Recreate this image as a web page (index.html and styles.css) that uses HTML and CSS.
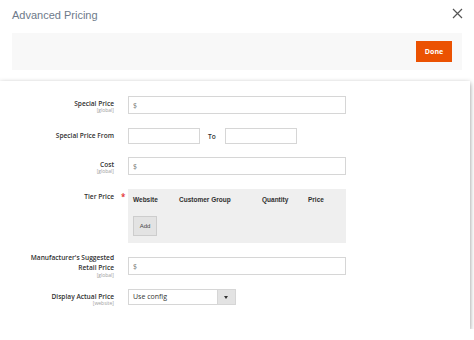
FILE: index.html
```html
<!DOCTYPE html>
<html>
<head>
  <title>Advanced Pricing</title>
  <link rel="stylesheet" href="styles.css">
</head>
<body>
  <div class="modal-header">
    <h1 class="modal-title">Advanced Pricing</h1>
    <button class="close-btn" aria-label="Close">
      <svg width="11" height="11" viewBox="0 0 11 11"><path d="M1 1 L10 10 M10 1 L1 10" stroke="#555" stroke-width="1.2" fill="none"/></svg>
    </button>
  </div>
  <div class="toolbar">
    <button class="done-btn">Done</button>
  </div>
  <div class="panel">
    <div class="field">
      <div class="label">Special Price<span class="scope">[global]</span></div>
      <div class="control"><input class="text-input wide" placeholder="$"></div>
    </div>
    <div class="field short-row">
      <div class="label">Special Price From</div>
      <div class="control range">
        <input class="text-input short">
        <span class="to">To</span>
        <input class="text-input short">
      </div>
    </div>
    <div class="field">
      <div class="label">Cost<span class="scope">[global]</span></div>
      <div class="control"><input class="text-input wide" placeholder="$"></div>
    </div>
    <div class="field">
      <div class="label required">Tier Price</div>
      <div class="control">
        <div class="tier-box">
          <div class="tier-head">
            <span class="col-website">Website</span>
            <span class="col-group">Customer Group</span>
            <span class="col-qty">Quantity</span>
            <span class="col-price">Price</span>
          </div>
          <button class="add-btn">Add</button>
        </div>
      </div>
    </div>
    <div class="field">
      <div class="label two-line">Manufacturer's Suggested Retail Price<span class="scope">[global]</span></div>
      <div class="control"><input class="text-input wide" placeholder="$"></div>
    </div>
    <div class="field short-row">
      <div class="label">Display Actual Price<span class="scope">[website]</span></div>
      <div class="control">
        <div class="select">
          <span class="select-value">Use config</span>
          <span class="select-arrow"></span>
        </div>
      </div>
    </div>
  </div>
</body>
</html>
```
FILE: styles.css
```css
:root {
  --orange: #eb5202;
  --border: #d6d6d6;
  --label: #303030;
  --muted: #a0a0a0;
}

body {
  margin: 0;
  font-family: "Open Sans", Arial, sans-serif;
  background: #fff;
  overflow: hidden;
}

.modal-header {
  display: flex;
  justify-content: space-between;
  align-items: flex-start;
  height: 33px;
  padding: 0 12px;
  box-sizing: border-box;
}

.modal-title {
  margin: 9px 0 0;
  font-family: "Liberation Sans", Arial, sans-serif;
  font-weight: normal;
  font-size: 11px;
  color: #6e7a8a;
}

.close-btn {
  border: 0;
  background: none;
  padding: 0;
  margin: 8px -1px 0 0;
  width: 11px;
  height: 11px;
}

.close-btn svg {
  display: block;
}

.toolbar {
  display: flex;
  justify-content: flex-end;
  align-items: center;
  margin: 0 12px;
  height: 37px;
  padding-right: 10px;
  background: #f8f8f8;
}

.done-btn {
  border: 0;
  background: var(--orange);
  color: #fff;
  font-family: "Open Sans", Arial, sans-serif;
  font-weight: 700;
  font-size: 7px;
  width: 36px;
  height: 21px;
  padding: 0;
}

.panel {
  margin-top: 11px;
  width: 470px;
  height: 248px;
  box-sizing: border-box;
  padding-top: 15px;
  background: #fff;
  box-shadow: 0 2px 5px rgba(0, 0, 0, 0.45);
}

.field {
  display: flex;
  align-items: flex-start;
  margin-bottom: 14px;
}

.field.short-row {
  height: 16px;
  margin-bottom: 13px;
}

.label {
  width: 114px;
  height: 18px;
  box-sizing: border-box;
  padding: 4px 0 0 30px;
  text-align: right;
  font-size: 6.6px;
  font-weight: 600;
  line-height: 8px;
  color: var(--label);
  position: relative;
}

.label.two-line {
  margin-top: -4px;
  padding-top: 0;
  line-height: 10px;
}

.label.required::after {
  content: "*";
  position: absolute;
  left: 121px;
  top: 4px;
  color: #e22626;
  font-size: 8px;
}

.scope {
  display: block;
  font-size: 5px;
  font-weight: 400;
  line-height: 5px;
  color: var(--muted);
}

.control {
  margin-left: 14px;
}

.text-input {
  display: block;
  box-sizing: border-box;
  height: 18px;
  border: 1px solid var(--border);
  padding: 0 4px;
  font-family: "Open Sans", Arial, sans-serif;
  font-size: 7px;
  color: #333;
  background: #fff;
}

.text-input::placeholder {
  color: #777;
}

.wide {
  width: 218px;
}

.range {
  display: flex;
  align-items: center;
}

.short {
  width: 72px;
  height: 16px;
}

.to {
  width: 25px;
  padding-left: 8px;
  box-sizing: border-box;
  font-size: 6.6px;
  font-weight: 600;
  color: var(--label);
}

.tier-box {
  width: 218px;
  height: 54px;
  box-sizing: border-box;
  padding: 7px 5px;
  background: #efefef;
}

.tier-head {
  display: flex;
  font-family: "Liberation Sans", Arial, sans-serif;
  font-size: 6.5px;
  font-weight: 700;
  color: #303030;
}

.col-website { width: 46px; }
.col-group { width: 83px; }
.col-qty { width: 46px; }

.add-btn {
  margin-top: 13px;
  width: 24px;
  height: 20px;
  padding: 0;
  border: 1px solid #cdcdcd;
  background: #e3e3e3;
  font-family: "Liberation Sans", Arial, sans-serif;
  font-size: 6px;
  color: #444;
}

.select {
  display: flex;
  width: 108px;
  height: 16px;
  box-sizing: border-box;
  border: 1px solid var(--border);
}

.select-value {
  flex: 1;
  padding-left: 4px;
  font-size: 7px;
  line-height: 14px;
  color: #333;
}

.select-arrow {
  width: 17px;
  background: #e3e3e3;
  border-left: 1px solid var(--border);
  position: relative;
}

.select-arrow::after {
  content: "";
  position: absolute;
  left: 6px;
  top: 6px;
  border-left: 2.5px solid transparent;
  border-right: 2.5px solid transparent;
  border-top: 3px solid #333;
}
```
